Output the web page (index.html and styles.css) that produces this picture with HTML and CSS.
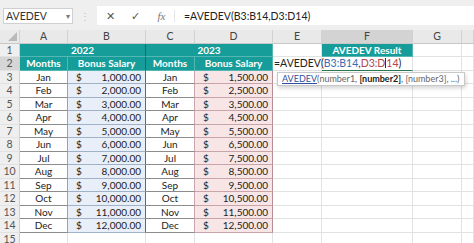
FILE: index.html
```html
<!DOCTYPE html>
<html>
  <head>
    <title>AVEDEV</title>
    <link rel="stylesheet" href="styles.css">
  </head>
  <body>

    <div class="bar">
      <div class="namebox">AVEDEV<span class="caret">&#9662;</span></div>
      <div class="grip">&#8942;</div>
      <div class="formula">
        <span class="btn">&#10005;</span>
        <span class="btn">&#10003;</span>
        <span class="fx">fx</span>
        <span class="ftext">=AVEDEV(B3:B14,D3:D14)</span>
      </div>
    </div>

    <div class="wrap">
      <table class="sheet">
        <colgroup>
          <col class="w-hdr"><col class="w-a"><col class="w-b"><col class="w-c"><col class="w-d"><col class="w-e"><col class="w-f"><col class="w-g"><col class="w-rest">
        </colgroup>
        <tr class="heads">
          <th class="corner"><span class="tri"></span></th>
          <th>A</th><th>B</th><th>C</th><th>D</th><th>E</th><th class="sel">F</th><th>G</th><th></th>
        </tr>
        <tr>
          <th class="rh">1</th>
          <td colspan="2" class="teal split">2022</td>
          <td colspan="2" class="teal">2023</td>
          <td></td>
          <td class="teal">AVEDEV Result</td>
          <td></td><td></td>
        </tr>
        <tr>
          <th class="rh sel">2</th>
          <td class="teal">Months</td>
          <td class="teal split">Bonus Salary</td>
          <td class="teal">Months</td>
          <td class="teal">Bonus Salary</td>
          <td class="edit"><div class="incell">=AVEDEV(<span class="ref-b">B3:B14</span>,<span class="ref-d">D3:D<span class="cursor"></span>14</span>)</div></td>
          <td class="active"></td>
          <td></td><td></td>
        </tr>
        <tr><th class="rh">3</th><td class="mon">Jan</td><td class="amt b"><div><span>$</span><span>1,000.00</span></div></td><td class="mon">Jan</td><td class="amt d"><div><span>$</span><span>1,500.00</span></div></td><td></td><td></td><td></td><td></td></tr>
        <tr><th class="rh">4</th><td class="mon">Feb</td><td class="amt b"><div><span>$</span><span>2,000.00</span></div></td><td class="mon">Feb</td><td class="amt d"><div><span>$</span><span>2,500.00</span></div></td><td></td><td></td><td></td><td></td></tr>
        <tr><th class="rh">5</th><td class="mon">Mar</td><td class="amt b"><div><span>$</span><span>3,000.00</span></div></td><td class="mon">Mar</td><td class="amt d"><div><span>$</span><span>3,500.00</span></div></td><td></td><td></td><td></td><td></td></tr>
        <tr><th class="rh">6</th><td class="mon">Apr</td><td class="amt b"><div><span>$</span><span>4,000.00</span></div></td><td class="mon">Apr</td><td class="amt d"><div><span>$</span><span>4,500.00</span></div></td><td></td><td></td><td></td><td></td></tr>
        <tr><th class="rh">7</th><td class="mon">May</td><td class="amt b"><div><span>$</span><span>5,000.00</span></div></td><td class="mon">May</td><td class="amt d"><div><span>$</span><span>5,500.00</span></div></td><td></td><td></td><td></td><td></td></tr>
        <tr><th class="rh">8</th><td class="mon">Jun</td><td class="amt b"><div><span>$</span><span>6,000.00</span></div></td><td class="mon">Jun</td><td class="amt d"><div><span>$</span><span>6,500.00</span></div></td><td></td><td></td><td></td><td></td></tr>
        <tr><th class="rh">9</th><td class="mon">Jul</td><td class="amt b"><div><span>$</span><span>7,000.00</span></div></td><td class="mon">Jul</td><td class="amt d"><div><span>$</span><span>7,500.00</span></div></td><td></td><td></td><td></td><td></td></tr>
        <tr><th class="rh">10</th><td class="mon">Aug</td><td class="amt b"><div><span>$</span><span>8,000.00</span></div></td><td class="mon">Aug</td><td class="amt d"><div><span>$</span><span>8,500.00</span></div></td><td></td><td></td><td></td><td></td></tr>
        <tr><th class="rh">11</th><td class="mon">Sep</td><td class="amt b"><div><span>$</span><span>9,000.00</span></div></td><td class="mon">Sep</td><td class="amt d"><div><span>$</span><span>9,500.00</span></div></td><td></td><td></td><td></td><td></td></tr>
        <tr><th class="rh">12</th><td class="mon">Oct</td><td class="amt b"><div><span>$</span><span>10,000.00</span></div></td><td class="mon">Oct</td><td class="amt d"><div><span>$</span><span>10,500.00</span></div></td><td></td><td></td><td></td><td></td></tr>
        <tr><th class="rh">13</th><td class="mon">Nov</td><td class="amt b"><div><span>$</span><span>11,000.00</span></div></td><td class="mon">Nov</td><td class="amt d"><div><span>$</span><span>11,500.00</span></div></td><td></td><td></td><td></td><td></td></tr>
        <tr><th class="rh">14</th><td class="mon">Dec</td><td class="amt b"><div><span>$</span><span>12,000.00</span></div></td><td class="mon">Dec</td><td class="amt d"><div><span>$</span><span>12,500.00</span></div></td><td></td><td></td><td></td><td></td></tr>
        <tr><th class="rh">15</th><td></td><td></td><td></td><td></td><td></td><td></td><td></td><td></td></tr>
      </table>

      <div class="tip"><a class="fn">AVEDEV</a>(number1, <b>[number2]</b>, [number3], ...)</div>
    </div>

  </body>
</html>
```

FILE: styles.css
```css
body {
  margin: 0;
  background-color: white;
  font-family: Lato, "Open Sans", sans-serif;
  color: #222;
  overflow: hidden;
}

/* formula bar */
.bar {
  display: flex;
  align-items: center;
  height: 30px;
  padding: 4px 0 3px 3px;
  box-sizing: border-box;
  background-color: #efefef;
}
.namebox {
  width: 70px;
  height: 16px;
  box-sizing: border-box;
  border: 1px solid #d0d0d0;
  background-color: white;
  font-size: 10.5px;
  line-height: 14px;
  padding-left: 2px;
  color: #333;
  position: relative;
}
.caret {
  position: absolute;
  right: 2px;
  top: 0;
  font-size: 8px;
  color: #777;
}
.grip {
  width: 24px;
  text-align: center;
  color: #bbb;
  font-size: 10px;
}
.formula {
  flex: 1;
  height: 19px;
  background-color: white;
  display: flex;
  align-items: center;
}
.btn {
  width: 25px;
  text-align: center;
  font-size: 11px;
  color: #555;
}
.btn:first-child {
  margin-left: 1px;
}
.fx {
  font-family: "Liberation Serif", serif;
  font-style: italic;
  font-size: 11px;
  color: #777;
  width: 25px;
  text-align: center;
  border-right: 1px solid #e4e4e4;
  margin-right: 9px;
  margin-left: 1px;
}
.ftext {
  font-size: 10.5px;
  color: #222;
}

/* grid */
.wrap {
  position: relative;
}
.sheet {
  border-collapse: separate;
  border-spacing: 0;
  table-layout: fixed;
  width: 474px;
  font-size: 10px;
}
.w-hdr { width: 20px; }
.w-a { width: 48px; }
.w-b { width: 78px; }
.w-c { width: 49px; }
.w-d { width: 78px; }
.w-e { width: 49px; }
.w-f { width: 91px; }
.w-g { width: 49px; }
.w-rest { width: 12px; }

.sheet tr {
  height: 13.5px;
}
.sheet td, .sheet th {
  padding: 0;
  box-sizing: border-box;
  border-right: 1px solid #e2e2e2;
  border-bottom: 1px solid #e2e2e2;
  white-space: nowrap;
  line-height: 12px;
  overflow: visible;
}
.heads {
  height: 13px;
}
.heads th {
  background-color: #e9e9e9;
  font-weight: normal;
  color: #444;
  border-right: 1px solid #d2d2d2;
  border-bottom: 1px solid #c8c8c8;
  font-size: 10.5px;
}
.heads th.sel {
  background-color: #d3d3d3;
}
.corner {
  position: relative;
}
.tri {
  position: absolute;
  right: 2px;
  bottom: 2px;
  border-left: 9px solid transparent;
  border-bottom: 9px solid #b9b9b9;
}
.rh {
  background-color: #efefef;
  font-weight: normal;
  color: #555;
  font-size: 10.5px;
  border-right: 1px solid #cfcfcf !important;
}
.rh.sel {
  background-color: #d6d6d6;
}

.teal {
  background-color: #169d99;
  color: white;
  font-weight: bold;
  text-align: center;
  border-right: 1px solid #54b7b3 !important;
  border-bottom: 1px solid #54b7b3 !important;
}
.teal.split {
  border-right: 1px solid #0d6e6b !important;
}

.mon {
  text-align: center;
  border-bottom: 1px solid #8c8c8c !important;
  border-right: 1px solid #8fa5bd !important;
}
.amt div {
  display: flex;
  justify-content: space-between;
  padding: 0 4px 0 8px;
}
.amt.b {
  background-color: #e9eff8;
  border-bottom: 1px solid #9fb2c7;
  border-right: 1px solid #5b6a7a;
}
.amt.d {
  background-color: #f8e6e7;
  border-bottom: 1px solid #c9a4ab;
  border-right: 1px solid #b88c94;
}
.sheet td.mon:nth-child(4) {
  border-right: 1px solid #c9a4ab !important;
}

.incell {
  font-size: 10.5px;
  color: #222;
  padding-left: 1px;
}
.ref-b { color: #3b6db3; }
.ref-d { color: #b2474d; }
.cursor {
  display: inline-block;
  width: 1px;
  height: 10px;
  background-color: #333;
  vertical-align: -1px;
}
.active {
  border-bottom: 1px solid #2a7a4e !important;
}

.tip {
  position: absolute;
  left: 277px;
  top: 42px;
  height: 12px;
  padding: 0 4px;
  border: 1px solid #c8c8c8;
  background-color: white;
  box-shadow: 1px 2px 4px rgba(0, 0, 0, 0.18);
  font-size: 9px;
  line-height: 12px;
  color: #666;
  white-space: nowrap;
}
.tip .fn {
  color: #2f4f9e;
  text-decoration: underline;
}
.tip b {
  color: #222;
}
```
